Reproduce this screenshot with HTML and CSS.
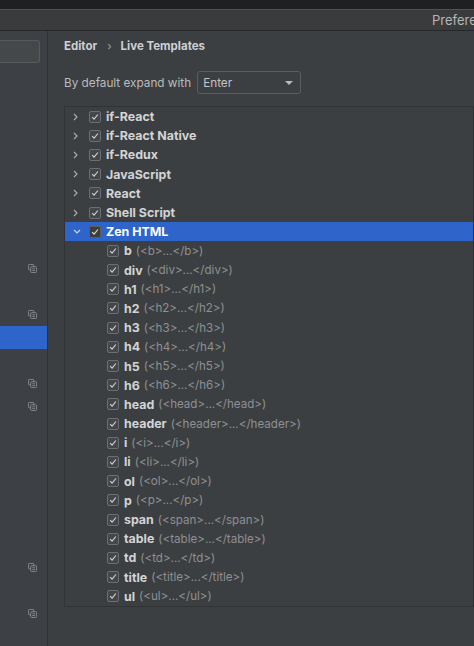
FILE: index.html
```html
<!DOCTYPE html>
<html>
<head>
<meta charset="utf-8">
<title>Preferences</title>
<link rel="stylesheet" href="styles.css">
</head>
<body>
<div class="topstrip"></div>
<div class="titlebar"><span>Preferences</span></div>
<div class="main">
  <aside class="sidebar">
    <div class="search"></div>
    <ul class="side-list">
      <li></li><li></li><li></li><li></li><li></li><li></li><li></li><li></li>
      <li><svg class="copy" viewBox="0 0 10 10"><rect x="0.5" y="0.5" width="6" height="6" rx="1"/><rect x="3" y="3" width="6.5" height="6.5" rx="1" class="front"/><path d="M4.8 5.3h3M4.8 7.3h3"/></svg></li>
      <li></li>
      <li><svg class="copy" viewBox="0 0 10 10"><rect x="0.5" y="0.5" width="6" height="6" rx="1"/><rect x="3" y="3" width="6.5" height="6.5" rx="1" class="front"/><path d="M4.8 5.3h3M4.8 7.3h3"/></svg></li>
      <li class="sel"></li>
      <li></li>
      <li><svg class="copy" viewBox="0 0 10 10"><rect x="0.5" y="0.5" width="6" height="6" rx="1"/><rect x="3" y="3" width="6.5" height="6.5" rx="1" class="front"/><path d="M4.8 5.3h3M4.8 7.3h3"/></svg></li>
      <li><svg class="copy" viewBox="0 0 10 10"><rect x="0.5" y="0.5" width="6" height="6" rx="1"/><rect x="3" y="3" width="6.5" height="6.5" rx="1" class="front"/><path d="M4.8 5.3h3M4.8 7.3h3"/></svg></li>
      <li></li><li></li><li></li><li></li><li></li><li></li>
      <li><svg class="copy" viewBox="0 0 10 10"><rect x="0.5" y="0.5" width="6" height="6" rx="1"/><rect x="3" y="3" width="6.5" height="6.5" rx="1" class="front"/><path d="M4.8 5.3h3M4.8 7.3h3"/></svg></li>
      <li></li>
      <li><svg class="copy" viewBox="0 0 10 10"><rect x="0.5" y="0.5" width="6" height="6" rx="1"/><rect x="3" y="3" width="6.5" height="6.5" rx="1" class="front"/><path d="M4.8 5.3h3M4.8 7.3h3"/></svg></li>
      <li></li>
    </ul>
  </aside>
  <section class="content">
    <div class="crumbs"><span>Editor</span><span class="sep">›</span><span>Live Templates</span></div>
    <div class="expand">
      <span class="label">By default expand with</span>
      <div class="select"><span>Enter</span><svg class="tri" viewBox="0 0 8 4"><path d="M0 0h8L4 4z"/></svg></div>
    </div>
    <div class="tree">
      <div class="row group"><svg class="chev" viewBox="0 0 5 8"><path d="M1 1l3 3-3 3"/></svg><span class="cb"><svg viewBox="0 0 12 12"><path d="M2.6 6.2l2.3 2.4 4.6-5.6"/></svg></span><b>if-React</b></div>
      <div class="row group"><svg class="chev" viewBox="0 0 5 8"><path d="M1 1l3 3-3 3"/></svg><span class="cb"><svg viewBox="0 0 12 12"><path d="M2.6 6.2l2.3 2.4 4.6-5.6"/></svg></span><b>if-React Native</b></div>
      <div class="row group"><svg class="chev" viewBox="0 0 5 8"><path d="M1 1l3 3-3 3"/></svg><span class="cb"><svg viewBox="0 0 12 12"><path d="M2.6 6.2l2.3 2.4 4.6-5.6"/></svg></span><b>if-Redux</b></div>
      <div class="row group"><svg class="chev" viewBox="0 0 5 8"><path d="M1 1l3 3-3 3"/></svg><span class="cb"><svg viewBox="0 0 12 12"><path d="M2.6 6.2l2.3 2.4 4.6-5.6"/></svg></span><b>JavaScript</b></div>
      <div class="row group"><svg class="chev" viewBox="0 0 5 8"><path d="M1 1l3 3-3 3"/></svg><span class="cb"><svg viewBox="0 0 12 12"><path d="M2.6 6.2l2.3 2.4 4.6-5.6"/></svg></span><b>React</b></div>
      <div class="row group"><svg class="chev" viewBox="0 0 5 8"><path d="M1 1l3 3-3 3"/></svg><span class="cb"><svg viewBox="0 0 12 12"><path d="M2.6 6.2l2.3 2.4 4.6-5.6"/></svg></span><b>Shell Script</b></div>
      <div class="row group selected"><svg class="chev down" viewBox="0 0 8 5"><path d="M1 1l3 3 3-3"/></svg><span class="cb"><svg viewBox="0 0 12 12"><path d="M2.6 6.2l2.3 2.4 4.6-5.6"/></svg></span><b>Zen HTML</b></div>
      <div class="row item"><span class="cb"><svg viewBox="0 0 12 12"><path d="M2.6 6.2l2.3 2.4 4.6-5.6"/></svg></span><b>b</b><span class="desc">(&lt;b&gt;...&lt;/b&gt;)</span></div>
      <div class="row item"><span class="cb"><svg viewBox="0 0 12 12"><path d="M2.6 6.2l2.3 2.4 4.6-5.6"/></svg></span><b>div</b><span class="desc">(&lt;div&gt;...&lt;/div&gt;)</span></div>
      <div class="row item"><span class="cb"><svg viewBox="0 0 12 12"><path d="M2.6 6.2l2.3 2.4 4.6-5.6"/></svg></span><b>h1</b><span class="desc">(&lt;h1&gt;...&lt;/h1&gt;)</span></div>
      <div class="row item"><span class="cb"><svg viewBox="0 0 12 12"><path d="M2.6 6.2l2.3 2.4 4.6-5.6"/></svg></span><b>h2</b><span class="desc">(&lt;h2&gt;...&lt;/h2&gt;)</span></div>
      <div class="row item"><span class="cb"><svg viewBox="0 0 12 12"><path d="M2.6 6.2l2.3 2.4 4.6-5.6"/></svg></span><b>h3</b><span class="desc">(&lt;h3&gt;...&lt;/h3&gt;)</span></div>
      <div class="row item"><span class="cb"><svg viewBox="0 0 12 12"><path d="M2.6 6.2l2.3 2.4 4.6-5.6"/></svg></span><b>h4</b><span class="desc">(&lt;h4&gt;...&lt;/h4&gt;)</span></div>
      <div class="row item"><span class="cb"><svg viewBox="0 0 12 12"><path d="M2.6 6.2l2.3 2.4 4.6-5.6"/></svg></span><b>h5</b><span class="desc">(&lt;h5&gt;...&lt;/h5&gt;)</span></div>
      <div class="row item"><span class="cb"><svg viewBox="0 0 12 12"><path d="M2.6 6.2l2.3 2.4 4.6-5.6"/></svg></span><b>h6</b><span class="desc">(&lt;h6&gt;...&lt;/h6&gt;)</span></div>
      <div class="row item"><span class="cb"><svg viewBox="0 0 12 12"><path d="M2.6 6.2l2.3 2.4 4.6-5.6"/></svg></span><b>head</b><span class="desc">(&lt;head&gt;...&lt;/head&gt;)</span></div>
      <div class="row item"><span class="cb"><svg viewBox="0 0 12 12"><path d="M2.6 6.2l2.3 2.4 4.6-5.6"/></svg></span><b>header</b><span class="desc">(&lt;header&gt;...&lt;/header&gt;)</span></div>
      <div class="row item"><span class="cb"><svg viewBox="0 0 12 12"><path d="M2.6 6.2l2.3 2.4 4.6-5.6"/></svg></span><b>i</b><span class="desc">(&lt;i&gt;...&lt;/i&gt;)</span></div>
      <div class="row item"><span class="cb"><svg viewBox="0 0 12 12"><path d="M2.6 6.2l2.3 2.4 4.6-5.6"/></svg></span><b>li</b><span class="desc">(&lt;li&gt;...&lt;/li&gt;)</span></div>
      <div class="row item"><span class="cb"><svg viewBox="0 0 12 12"><path d="M2.6 6.2l2.3 2.4 4.6-5.6"/></svg></span><b>ol</b><span class="desc">(&lt;ol&gt;...&lt;/ol&gt;)</span></div>
      <div class="row item"><span class="cb"><svg viewBox="0 0 12 12"><path d="M2.6 6.2l2.3 2.4 4.6-5.6"/></svg></span><b>p</b><span class="desc">(&lt;p&gt;...&lt;/p&gt;)</span></div>
      <div class="row item"><span class="cb"><svg viewBox="0 0 12 12"><path d="M2.6 6.2l2.3 2.4 4.6-5.6"/></svg></span><b>span</b><span class="desc">(&lt;span&gt;...&lt;/span&gt;)</span></div>
      <div class="row item"><span class="cb"><svg viewBox="0 0 12 12"><path d="M2.6 6.2l2.3 2.4 4.6-5.6"/></svg></span><b>table</b><span class="desc">(&lt;table&gt;...&lt;/table&gt;)</span></div>
      <div class="row item"><span class="cb"><svg viewBox="0 0 12 12"><path d="M2.6 6.2l2.3 2.4 4.6-5.6"/></svg></span><b>td</b><span class="desc">(&lt;td&gt;...&lt;/td&gt;)</span></div>
      <div class="row item"><span class="cb"><svg viewBox="0 0 12 12"><path d="M2.6 6.2l2.3 2.4 4.6-5.6"/></svg></span><b>title</b><span class="desc">(&lt;title&gt;...&lt;/title&gt;)</span></div>
      <div class="row item"><span class="cb"><svg viewBox="0 0 12 12"><path d="M2.6 6.2l2.3 2.4 4.6-5.6"/></svg></span><b>ul</b><span class="desc">(&lt;ul&gt;...&lt;/ul&gt;)</span></div>
    </div>
  </section>
</div>
</body>
</html>
```

FILE: styles.css
```css
* { box-sizing: border-box; margin: 0; padding: 0; }
html, body { width: 474px; height: 646px; overflow: hidden; }
body {
  background: #3c3f41;
  font-family: Inter, "Liberation Sans", sans-serif;
  font-size: 11.75px;
  color: #bbbcbd;
}
.topstrip { height: 9px; background: #1f2022; }
.titlebar {
  height: 22px;
  border-top: 1px solid #505153;
  border-bottom: 1px solid #26272a;
  background: #3a3b3d;
  padding-left: 432px;
  white-space: nowrap;
  overflow: hidden;
  line-height: 20px;
  font-size: 13px;
  color: #b5b6b7;
}
.main { display: flex; height: 615px; }
.sidebar {
  width: 48px;
  flex: none;
  background: #3d4045;
  border-right: 1px solid #303235;
  overflow: hidden;
}
.search {
  margin-top: 9px;
  width: 40px;
  height: 23px;
  border: 1px solid #585b5b;
  border-left: none;
  border-radius: 0 3px 3px 0;
  background: #45484a;
}
.side-list { list-style: none; padding-top: 10px; }
.side-list li {
  height: 23px;
  display: flex;
  align-items: center;
  justify-content: flex-end;
  padding-right: 10px;
}
.side-list li.sel { background: #2f65ca; }
.copy { width: 9px; height: 9px; fill: none; stroke: #8d8f94; stroke-width: 1; }
.copy .front { fill: #3d4045; }
.content {
  flex: 1;
  min-width: 0;
  display: flex;
  flex-direction: column;
  padding-left: 16px;
}
.crumbs {
  margin-top: 7px;
  height: 16px;
  line-height: 16px;
  font-size: 11.5px;
  font-weight: 700;
  color: #cfd0d2;
  display: flex;
}
.crumbs .sep { font-weight: 400; color: #a0a2a4; margin: 0 9px 0 10px; }
.expand { margin-top: 17px; display: flex; align-items: center; gap: 6px; }
.select {
  width: 104px;
  height: 23px;
  border: 1px solid #5a5c5e;
  border-radius: 3px;
  display: flex;
  align-items: center;
  justify-content: space-between;
  padding: 0 7px 0 5px;
  color: #c4c5c6;
}
.tri { width: 8px; height: 4px; fill: #b8b9ba; }
.tree {
  margin-top: 12px;
  height: 501px;
  border: 1px solid #313335;
  border-right-color: #2d2f31;
  overflow: hidden;
}
.row {
  height: 19.2px;
  display: flex;
  align-items: center;
  white-space: nowrap;
  font-size: 12.4px;
}
.row b { font-weight: 700; color: #d3d4d5; }
.row .desc { color: #8e9092; margin-left: 4px; font-size: 11.6px; }
.group { padding-left: 8px; }
.item { padding-left: 42px; }
.chev { width: 5px; height: 8px; fill: none; stroke: #a8aaac; stroke-width: 1.2; margin-right: 11px; }
.chev.down { width: 8px; height: 5px; margin-right: 8px; }
.cb {
  width: 12px;
  height: 12px;
  border: 1px solid #6c6e70;
  border-radius: 2px;
  background: #43464a;
  margin-right: 5px;
  display: flex;
  flex: none;
}
.cb svg { width: 100%; height: 100%; fill: none; stroke: #d0d1d2; stroke-width: 1.4; }
.selected { background: #2f65ca; }
.selected b { color: #ffffff; }
.selected .chev { stroke: #c8d6f2; }
.selected .cb { background: #3b3d3f; border-color: #5a5c5e; }
.selected .cb svg { stroke: #e6e1b4; }
```
